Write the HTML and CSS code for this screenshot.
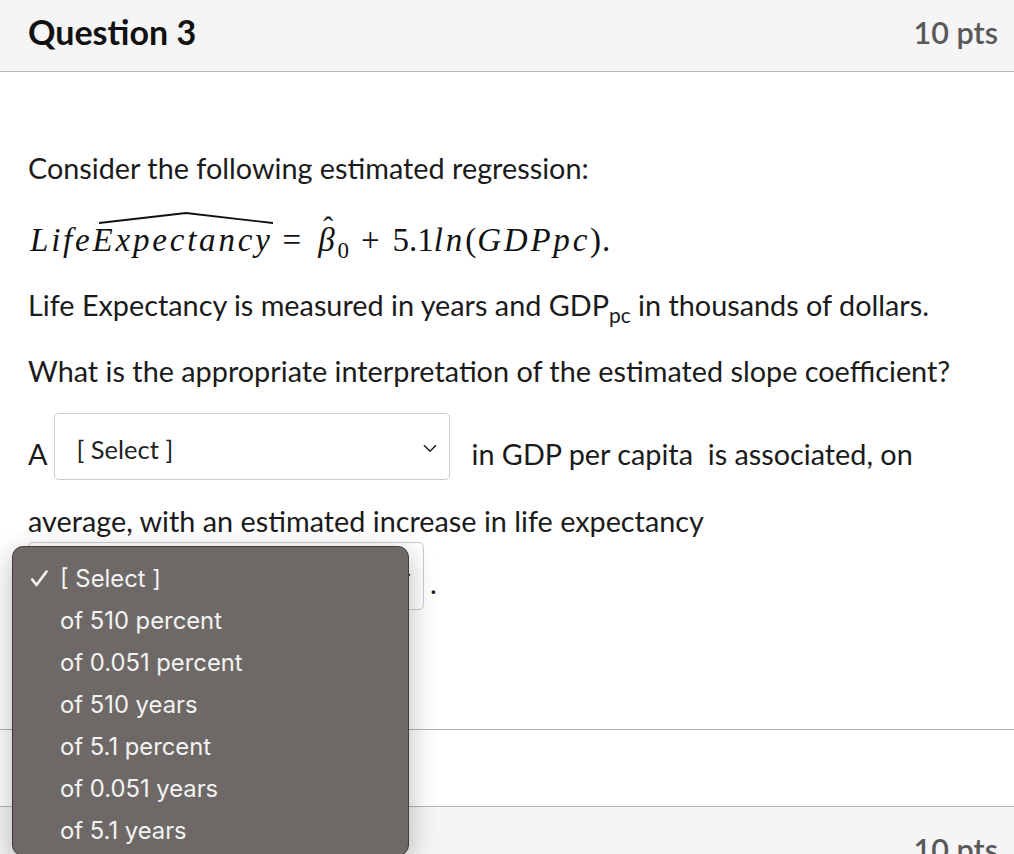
FILE: index.html
```html
<!DOCTYPE html>
<html lang="en">
<head>
<meta charset="utf-8">
<title>Question 3</title>
<link rel="stylesheet" href="styles.css">
</head>
<body>
<div class="page">
  <section class="question">
    <header class="q-header">
      <h2 class="q-title">Question 3</h2>
      <span class="q-points">10 pts</span>
    </header>
    <div class="q-body">
      <p class="para consider">Consider the following estimated regression:</p>
      <div class="equation">
        <span class="mi">Life</span><span class="widehat"><span class="mi">Expectancy</span><svg class="widehat-svg" viewBox="0 0 100 12" preserveAspectRatio="none"><path d="M0 11 L50 1 L100 11" fill="none" stroke="#111" stroke-width="1.8" vector-effect="non-scaling-stroke"/></svg></span><span class="mo eq">=</span><span class="mi hat">β</span><span class="msub">0</span><span class="mo plus">+</span><span class="mn">5.1</span><span class="mi">ln</span><span class="mo paren">(</span><span class="mi">GDPpc</span><span class="mo paren">).</span>
      </div>
      <p class="para life">Life Expectancy is measured in years and GDP<sub class="sub">pc</sub> in thousands of dollars.</p>
      <p class="para what">What is the appropriate interpretation of the estimated slope coefficient?</p>
      <div class="row row-one">
        <span class="word">A</span>
        <div class="select select-one">
          <span class="select-label">[ Select ]</span>
          <svg class="chevron" width="14" height="9" viewBox="0 0 14 9"><path d="M1 1.2 L7 7.2 L13 1.2" fill="none" stroke="#222" stroke-width="1.6"/></svg>
        </div>
        <span class="word after">in GDP per capita&nbsp; is associated, on</span>
      </div>
      <p class="para average">average, with an estimated increase in life expectancy</p>
      <div class="row row-three">
        <div class="select select-two">
          <span class="select-label">[ Select ]</span>
          <svg class="chevron" width="14" height="9" viewBox="0 0 14 9"><path d="M1 1.2 L7 7.2 L13 1.2" fill="none" stroke="#222" stroke-width="1.6"/></svg>
        </div>
        <span class="word dot">.</span>
      </div>
    </div>
  </section>

  <div class="gap"></div>

  <section class="question next">
    <header class="q-header next-header">
      <h2 class="q-title">Question 4</h2>
      <span class="q-points">10 pts</span>
    </header>
  </section>

  <ul class="listbox">
    <li class="option selected"><svg class="check" width="18" height="17" viewBox="0 0 18 17"><path d="M2.2 9.5 L6.5 15 L16.5 1.5" fill="none" stroke="#f3f3f3" stroke-width="2.6" stroke-linecap="round" stroke-linejoin="round"/></svg><span class="opt-label">[ Select ]</span></li>
    <li class="option"><span class="check-space"></span><span class="opt-label">of 510 percent</span></li>
    <li class="option"><span class="check-space"></span><span class="opt-label">of 0.051 percent</span></li>
    <li class="option"><span class="check-space"></span><span class="opt-label">of 510 years</span></li>
    <li class="option"><span class="check-space"></span><span class="opt-label">of 5.1 percent</span></li>
    <li class="option"><span class="check-space"></span><span class="opt-label">of 0.051 years</span></li>
    <li class="option"><span class="check-space"></span><span class="opt-label">of 5.1 years</span></li>
  </ul>
</div>
</body>
</html>
```

FILE: styles.css
```css
* { box-sizing: border-box; }

html, body {
  margin: 0;
  padding: 0;
  height: 854px;
  overflow: hidden;
  background: #ffffff;
}

body {
  font-family: "Lato", "Noto Sans", sans-serif;
  color: #1b1b1b;
}

.page {
  position: relative;
  width: 1014px;
  height: 854px;
  overflow: hidden;
}

/* header */
.q-header {
  display: flex;
  align-items: center;
  justify-content: space-between;
  height: 72px;
  padding: 0 16px 8px 28px;
  background: #f5f5f5;
  border-bottom: 1px solid #b4b4b4;
}

.q-title {
  margin: 0;
  font-size: 34px;
  font-weight: 700;
  color: #111;
  line-height: 40px;
}

.q-points {
  font-size: 30.5px;
  font-weight: 600;
  color: #595959;
  line-height: 40px;
}

/* body */
.q-body {
  padding: 78px 28px 119px;
  border-bottom: 1px solid #b4b4b4;
}

.para {
  margin: 0;
  font-size: 28.8px;
  line-height: 36px;
}

.life { margin-top: 27px; }
.what { margin-top: 30px; }
.average { margin-top: 23px; }

.sub {
  font-size: 21px;
  vertical-align: -7px;
  line-height: 0;
}

/* equation */
.equation {
  margin-top: 30px;
  height: 44px;
  display: flex;
  align-items: baseline;
  padding-left: 2px;
  padding-top: 4px;
  font-family: "Liberation Serif", "Times New Roman", serif;
  font-size: 33px;
  line-height: 40px;
  color: #111;
}

.mi {
  font-style: italic;
  letter-spacing: 2.8px;
}

.mo, .mn {
  font-style: normal;
}

.eq { margin: 0 17px 0 10px; }
.plus { margin: 0 13px 0 12px; }
.paren { letter-spacing: 1px; }

.widehat {
  position: relative;
  display: inline-block;
}

.widehat-svg {
  position: absolute;
  left: 6px;
  top: -8px;
  width: calc(100% - 6px);
  height: 12px;
}

.hat {
  position: relative;
  display: inline-block;
}

.hat::after {
  content: "\02C6";
  position: absolute;
  left: 5px;
  top: -13px;
  font-style: normal;
  font-size: 30px;
}

.msub {
  font-size: 23px;
  transform: translateY(7px);
  display: inline-block;
}

/* select rows */
.row {
  display: flex;
  align-items: flex-start;
  font-size: 28.8px;
  line-height: 36px;
}

.row-one { margin-top: 24px; }
.row-three { margin-top: 3px; }

.word {
  margin-top: 23px;
  white-space: nowrap;
}

.select {
  position: relative;
  display: flex;
  align-items: flex-start;
  width: 396px;
  border: 1px solid #c9cdd1;
  border-radius: 5px;
  background: #fff;
  padding: 17px 0 0 22px;
}

.select-one {
  height: 67px;
  margin: 0 22px 0 6px;
}

.select-two {
  height: 68px;
}

.select-label {
  font-size: 25.5px;
  line-height: 36px;
  color: #222;
}

.chevron {
  position: absolute;
  right: 12px;
  top: 30px;
}

.dot { margin-left: 6px; }

/* gap and next question */
.gap { height: 76px; }

.next-header {
  border-top: 1px solid #b4b4b4;
  border-bottom: none;
  padding-top: 13px;
  padding-bottom: 0;
  height: 72px;
}

.next-header .q-title { visibility: hidden; }

/* open dropdown list */
.listbox {
  position: absolute;
  left: 12px;
  top: 546px;
  width: 397px;
  margin: 0;
  padding: 10px 0 4px;
  list-style: none;
  background: #6e6966;
  border: 1px solid #3f3c3a;
  border-radius: 11px;
  box-shadow: 0 8px 28px rgba(0, 0, 0, 0.28);
  font-family: "Inter", "Roboto", sans-serif;
  font-size: 23.8px;
  color: #f3f3f3;
}

.option {
  display: flex;
  align-items: center;
  height: 42px;
  padding-left: 17px;
}

.check {
  width: 18px;
  height: 17px;
  margin-right: 12px;
}

.check-space {
  display: inline-block;
  width: 30px;
}

.opt-label {
  letter-spacing: 0;
}
```
